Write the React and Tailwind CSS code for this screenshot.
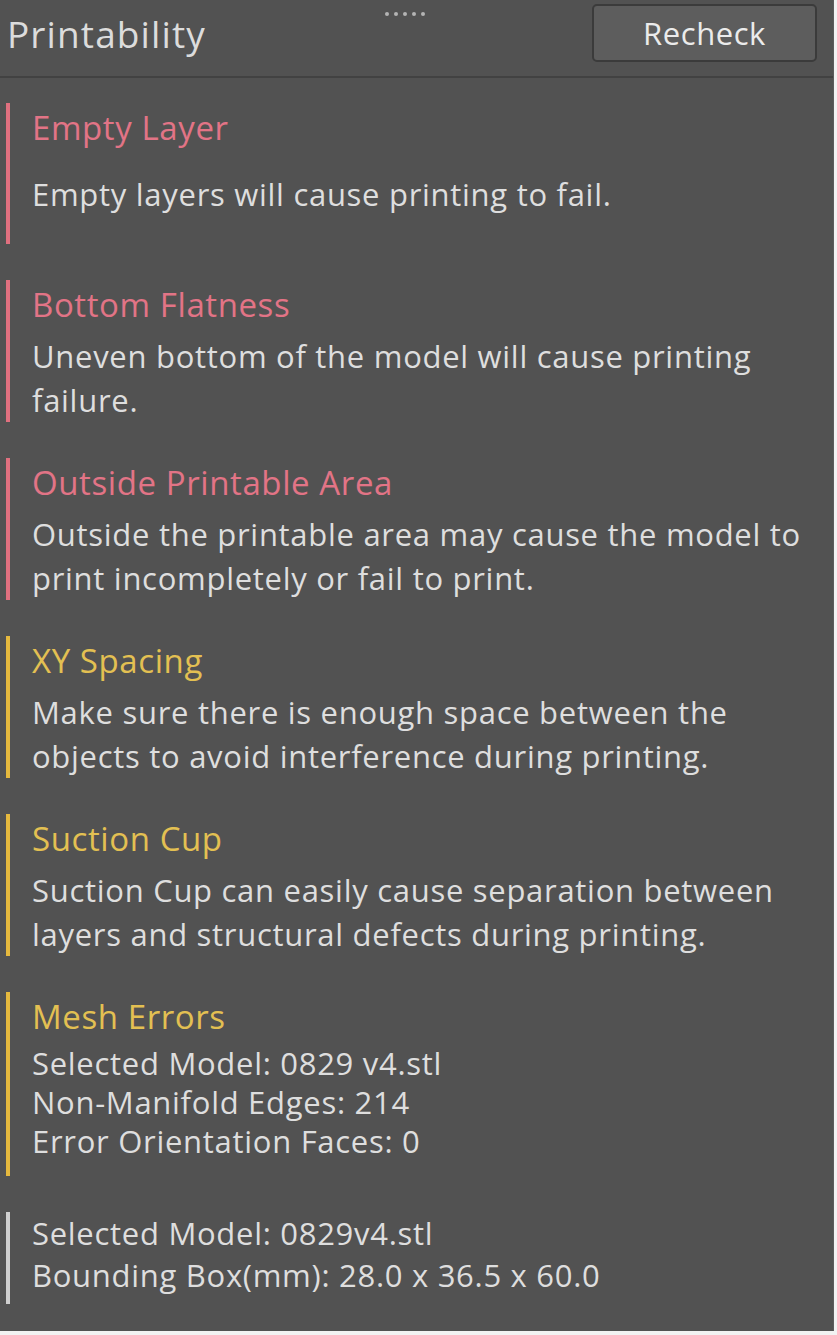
import React from "react";

const PINK_BAR = "border-[#e0707f]";
const YELLOW_BAR = "border-[#e6b93e]";
const GRAY_BAR = "border-[#cfcfcf]";

function Title({ children, color }) {
  return (
    <div className={`text-[33px] leading-[44px] tracking-[0.018em] whitespace-nowrap ${color}`}>
      {children}
    </div>
  );
}

function Lines({ lines, lh = "leading-[44px]" }) {
  return (
    <div className={`text-[31px] ${lh} tracking-[0.023em] text-[#dedede]`}>
      {lines.map((l, i) => (
        <div key={i} className="whitespace-nowrap">
          {l}
        </div>
      ))}
    </div>
  );
}

export default function App() {
  return (
    <div className="w-[837px] h-[1335px] bg-[#f2f2f2]">
      <div className="w-[834px] h-[1331px] bg-[#525252] border-r border-[#5c5c5c] font-['Open_Sans',sans-serif] font-medium overflow-hidden">
        {/* Header */}
        <div className="relative h-[78px] pb-[10px] border-b-2 border-[#424242] flex items-center justify-between pl-[7px] pr-[16px]">
          <div className="text-[37px] leading-none text-[#dcdcdc] tracking-[0.03em]">Printability</div>
          <div className="absolute left-[385px] top-[12px] flex gap-[5px]">
            <span className="w-[4px] h-[4px] rounded-full bg-[#b4b4b4]" />
            <span className="w-[4px] h-[4px] rounded-full bg-[#b4b4b4]" />
            <span className="w-[4px] h-[4px] rounded-full bg-[#b4b4b4]" />
            <span className="w-[4px] h-[4px] rounded-full bg-[#b4b4b4]" />
            <span className="w-[4px] h-[4px] rounded-full bg-[#b4b4b4]" />
          </div>
          <button className="w-[225px] h-[58px] rounded-[5px] border-2 border-[#3b3b3b] bg-[#5d5d5d] text-[31px] leading-none text-[#ebebeb] tracking-[0.018em] flex items-center justify-center">
            Recheck
          </button>
        </div>

        {/* Body */}
        <div className="pt-[25px] flex flex-col gap-[36px]">
          {/* Empty Layer */}
          <div className={`ml-[6px] border-l-4 ${PINK_BAR} pl-[22px] pt-[3px] pb-[28px]`}>
            <Title color="text-[#e27486]">Empty Layer</Title>
            <div className="mt-[22px]">
              <Lines lines={["Empty layers will cause printing to fail."]} />
            </div>
          </div>

          {/* Bottom Flatness */}
          <div className={`ml-[6px] border-l-4 ${PINK_BAR} pl-[22px] pt-[3px]`}>
            <Title color="text-[#e27486]">Bottom Flatness</Title>
            <div className="mt-[7px]">
              <Lines lines={["Uneven bottom of the model will cause printing", "failure."]} />
            </div>
          </div>

          {/* Outside Printable Area */}
          <div className={`ml-[6px] border-l-4 ${PINK_BAR} pl-[22px] pt-[3px]`}>
            <Title color="text-[#e27486]">Outside Printable Area</Title>
            <div className="mt-[7px]">
              <Lines
                lines={[
                  "Outside the printable area may cause the model to",
                  "print incompletely or fail to print.",
                ]}
              />
            </div>
          </div>

          {/* XY Spacing */}
          <div className={`ml-[6px] border-l-4 ${YELLOW_BAR} pl-[22px] pt-[3px]`}>
            <Title color="text-[#e3c052]">XY Spacing</Title>
            <div className="mt-[7px]">
              <Lines
                lines={[
                  "Make sure there is enough space between the",
                  "objects to avoid interference during printing.",
                ]}
              />
            </div>
          </div>

          {/* Suction Cup */}
          <div className={`ml-[6px] border-l-4 ${YELLOW_BAR} pl-[22px] pt-[3px]`}>
            <Title color="text-[#e3c052]">Suction Cup</Title>
            <div className="mt-[7px]">
              <Lines
                lines={[
                  "Suction Cup can easily cause separation between",
                  "layers and structural defects during printing.",
                ]}
              />
            </div>
          </div>

          {/* Mesh Errors */}
          <div className={`ml-[6px] border-l-4 ${YELLOW_BAR} pl-[22px] pt-[3px] pb-[15px]`}>
            <Title color="text-[#e3c052]">Mesh Errors</Title>
            <div className="mt-[5px]">
              <Lines
                lh="leading-[39px]"
                lines={[
                  "Selected Model: 0829 v4.stl",
                  "Non-Manifold Edges: 214",
                  "Error Orientation Faces: 0",
                ]}
              />
            </div>
          </div>

          {/* Model info */}
          <div className={`ml-[6px] border-l-4 ${GRAY_BAR} pl-[22px] pb-[8px]`}>
            <Lines
              lh="leading-[42px]"
              lines={[
                "Selected Model: 0829v4.stl",
                "Bounding Box(mm): 28.0 x 36.5 x 60.0",
              ]}
            />
          </div>
        </div>
      </div>
    </div>
  );
}
